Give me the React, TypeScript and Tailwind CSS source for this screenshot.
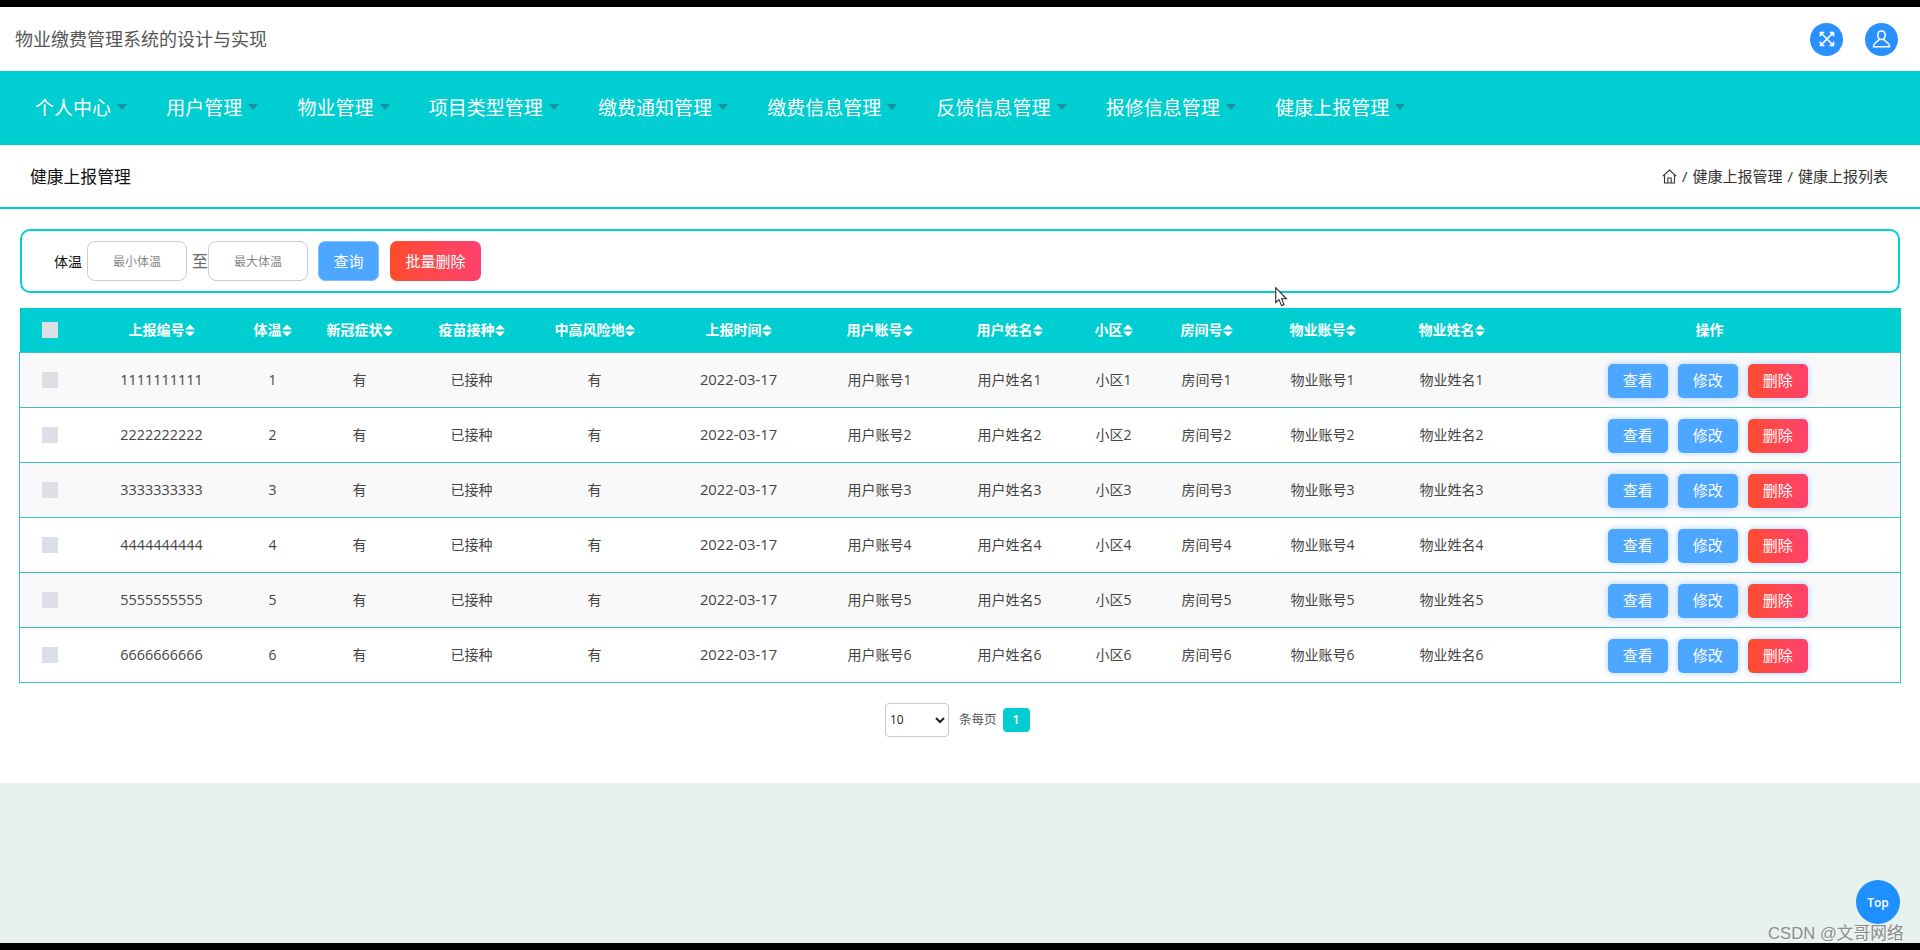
import React from 'react';

const font = { fontFamily: '"Open Sans", "Noto Sans CJK SC", sans-serif' };

const navItems = ['个人中心', '用户管理', '物业管理', '项目类型管理', '缴费通知管理', '缴费信息管理', '反馈信息管理', '报修信息管理', '健康上报管理'];

const columns = [
  { label: '上报编号', sort: true },
  { label: '体温', sort: true },
  { label: '新冠症状', sort: true },
  { label: '疫苗接种', sort: true },
  { label: '中高风险地', sort: true },
  { label: '上报时间', sort: true },
  { label: '用户账号', sort: true },
  { label: '用户姓名', sort: true },
  { label: '小区', sort: true },
  { label: '房间号', sort: true },
  { label: '物业账号', sort: true },
  { label: '物业姓名', sort: true },
  { label: '操作', sort: false },
];

const rows = [1, 2, 3, 4, 5, 6];

const SortIcon = () => (
  <svg width="10" height="13" viewBox="0 0 10 13" className="inline-block align-[-2px]">
    <path d="M5 0.5 L10 5.5 H0 Z M0 7.5 H10 L5 12.5 Z" fill="#fff" />
  </svg>
);

const ExpandIcon = () => (
  <svg width="16" height="16" viewBox="0 0 16 16" fill="none" stroke="#fff" strokeWidth="1.7">
    <path d="M3 3 L13 13 M13 3 L3 13" />
    <path d="M1 5.5 V1 H5.5 Z M10.5 1 H15 V5.5 Z M15 10.5 V15 H10.5 Z M5.5 15 H1 V10.5 Z" fill="#fff" strokeWidth="0.6" />
  </svg>
);

const UserIcon = () => (
  <svg width="19" height="18" viewBox="0 0 19 18" fill="none" stroke="#fff" strokeWidth="1.5">
    <path d="M9.5 1 C12 1 13.2 2.8 13.2 5 C13.2 7.4 12 9.6 9.5 9.6 C7 9.6 5.8 7.4 5.8 5 C5.8 2.8 7 1 9.5 1 Z" />
    <path d="M7.2 9 C7.2 11.6 1.6 12.4 1.6 15.6 V16.8 H17.4 V15.6 C17.4 12.4 11.8 11.6 11.8 9" />
  </svg>
);

const HomeIcon = () => (
  <svg width="15" height="15" viewBox="0 0 15 15" fill="none" stroke="#333" strokeWidth="1.1">
    <path d="M0.8 7.2 L7.5 1 L14.2 7.2" />
    <path d="M2.5 6 V14 H12.5 V6" />
    <path d="M5.8 14 V9 H9.2 V14" />
  </svg>
);

const Cursor = () => (
  <svg width="13" height="20" viewBox="0 0 13 20" className="absolute left-[1275px] top-[287px]">
    <path d="M0.7 0.7 V15.5 L4 12.6 L6.6 18.6 L9 17.6 L6.6 11.8 H11.4 Z" fill="#fff" stroke="#2a2a33" strokeWidth="1.1" />
  </svg>
);

export default function App() {
  return (
    <div className="relative flex h-[950px] w-[1920px] flex-col overflow-hidden bg-black" style={font}>
      <div className="h-[7px] shrink-0 bg-black" />

      {/* top bar */}
      <header className="flex h-[64px] shrink-0 items-center justify-between bg-white pl-[15px] pr-[22px]">
        <div className="pt-px text-[18px] text-[#555]">物业缴费管理系统的设计与实现</div>
        <div className="flex items-center gap-[22px]">
          <div className="flex h-[33px] w-[33px] items-center justify-center rounded-full bg-[#2890ff]">
            <ExpandIcon />
          </div>
          <div className="flex h-[33px] w-[33px] items-center justify-center rounded-full bg-[#2890ff]">
            <UserIcon />
          </div>
        </div>
      </header>

      {/* nav */}
      <nav className="flex h-[74px] shrink-0 items-center gap-[39.25px] bg-[#00ced1] pl-[35px]">
        {navItems.map((item) => (
          <div key={item} className="flex items-center gap-[6px] text-[19px] text-white">
            <span>{item}</span>
            <span className="-mt-[2px] h-0 w-0 border-x-[5px] border-t-[6px] border-x-transparent border-t-[#1a8f9e]" />
          </div>
        ))}
      </nav>

      {/* breadcrumb */}
      <div className="flex h-[64px] shrink-0 items-center justify-between border-b-2 border-[#00ced1] bg-white pl-[30px] pr-[32px]">
        <div className="pt-px text-[16.8px] text-[#111]">健康上报管理</div>
        <div className="flex items-center gap-[5px] text-[15px] text-[#333]">
          <HomeIcon />
          <span>/</span>
          <span>健康上报管理</span>
          <span>/</span>
          <span>健康上报列表</span>
        </div>
      </div>

      <main className="h-[574px] shrink-0 bg-white pl-[20px] pt-[20px]">
        {/* search */}
        <div className="flex h-[64px] w-[1880px] items-center rounded-[10px] border-2 border-[#00ced1] pl-[32px]">
          <span className="mr-[5px] text-[14px] text-[#111]">体温</span>
          <input
            placeholder="最小体温"
            className="h-[40px] w-[100px] rounded-[8px] border border-[#ccc] bg-white text-center text-[12px] placeholder:text-[#888]"
          />
          <span className="ml-[5px] w-[16px] text-[16px] text-[#666]">至</span>
          <input
            placeholder="最大体温"
            className="h-[40px] w-[100px] rounded-[8px] border border-[#ccc] bg-white text-center text-[12px] placeholder:text-[#888]"
          />
          <button className="ml-[10px] h-[40px] w-[61px] rounded-[7px] border border-[#7fbfff] bg-[#4da6ff] text-[15px] text-white">查询</button>
          <button className="ml-[11px] h-[40px] w-[91px] rounded-[7px] bg-gradient-to-r from-[#ff4b2b] to-[#ff416c] text-[15px] text-white">批量删除</button>
        </div>

        {/* table */}
        <table className="-ml-px mt-[15px] w-[1881px] table-fixed border-collapse text-[14px] text-[#444]">
          <colgroup>
            <col className="w-[61px]" />
            <col className="w-[162px]" />
            <col className="w-[60px]" />
            <col className="w-[114px]" />
            <col className="w-[110px]" />
            <col className="w-[136px]" />
            <col className="w-[152px]" />
            <col className="w-[130px]" />
            <col className="w-[130px]" />
            <col className="w-[78px]" />
            <col className="w-[108px]" />
            <col className="w-[124px]" />
            <col className="w-[134px]" />
            <col className="w-[382px]" />
          </colgroup>
          <thead>
            <tr className="h-[44px] bg-[#00ced1] text-white">
              <th className="p-0">
                <span className="mx-auto block h-[16px] w-[16px] bg-[#dcdfe6]" />
              </th>
              {columns.map((c) => (
                <th key={c.label} className="p-0 text-[14px] font-bold">
                  {c.label}
                  {c.sort && <SortIcon />}
                </th>
              ))}
            </tr>
          </thead>
          <tbody>
            {rows.map((n) => (
              <tr key={n} className={`h-[55px] border border-[#3cbfc6] ${n % 2 === 1 ? 'bg-[#f9f9fa]' : 'bg-white'}`}>
                <td className="p-0">
                  <span className="mx-auto block h-[16px] w-[16px] bg-[#dcdfe6]" />
                </td>
                <td className="p-0 text-center text-[14.4px]">{String(n).repeat(10)}</td>
                <td className="p-0 text-center">{n}</td>
                <td className="p-0 text-center">有</td>
                <td className="p-0 text-center">已接种</td>
                <td className="p-0 text-center">有</td>
                <td className="p-0 text-center text-[14.8px]">2022-03-17</td>
                <td className="p-0 text-center">用户账号{n}</td>
                <td className="p-0 text-center">用户姓名{n}</td>
                <td className="p-0 text-center">小区{n}</td>
                <td className="p-0 text-center">房间号{n}</td>
                <td className="p-0 text-center">物业账号{n}</td>
                <td className="p-0 text-center">物业姓名{n}</td>
                <td className="p-0">
                  <div className="flex justify-center gap-[10px] pr-[3px] pt-[2px]">
                    <button className="h-[34px] w-[60px] rounded-[5px] bg-[#4da6ff] text-[15px] text-white shadow-[0_0_6px_rgba(77,166,255,0.5)]">查看</button>
                    <button className="h-[34px] w-[60px] rounded-[5px] bg-[#4da6ff] text-[15px] text-white shadow-[0_0_6px_rgba(77,166,255,0.5)]">修改</button>
                    <button className="h-[34px] w-[60px] rounded-[5px] bg-gradient-to-r from-[#ff4b2b] to-[#ff416c] text-[15px] text-white shadow-[0_0_6px_rgba(77,166,255,0.5)]">删除</button>
                  </div>
                </td>
              </tr>
            ))}
          </tbody>
        </table>

        {/* pagination */}
        <div className="mt-[20px] flex items-center pl-[865px]">
          <select className="h-[34px] w-[64px] rounded-[4px] border border-[#ccc] bg-white text-[12px] text-[#222]">
            <option>10</option>
          </select>
          <span className="ml-[10px] pt-px text-[12.5px] text-[#555]">条每页</span>
          <span className="ml-[6px] flex h-[24px] w-[27px] items-center justify-center rounded-[4px] bg-[#00ced1] text-[13px] font-semibold text-white">1</span>
        </div>
      </main>

      <div className="flex-1 bg-[#e7f2ee]" />
      <div className="h-[7px] shrink-0 bg-black" />

      <Cursor />

      {/* back to top + watermark */}
      <div className="absolute left-[1856px] top-[880px] flex h-[44px] w-[44px] items-center justify-center rounded-full bg-[#1e90ff] pt-[1px] text-[12px] font-semibold text-white">Top</div>
      <div className="absolute left-[1768px] top-[921px] text-[16.7px] text-[#8c8c8c] [text-shadow:1px_1px_0_rgba(255,255,255,0.6)]" style={{ fontFamily: '"Liberation Sans", "Noto Sans CJK SC", sans-serif' }}>CSDN @文哥网络</div>
    </div>
  );
}
